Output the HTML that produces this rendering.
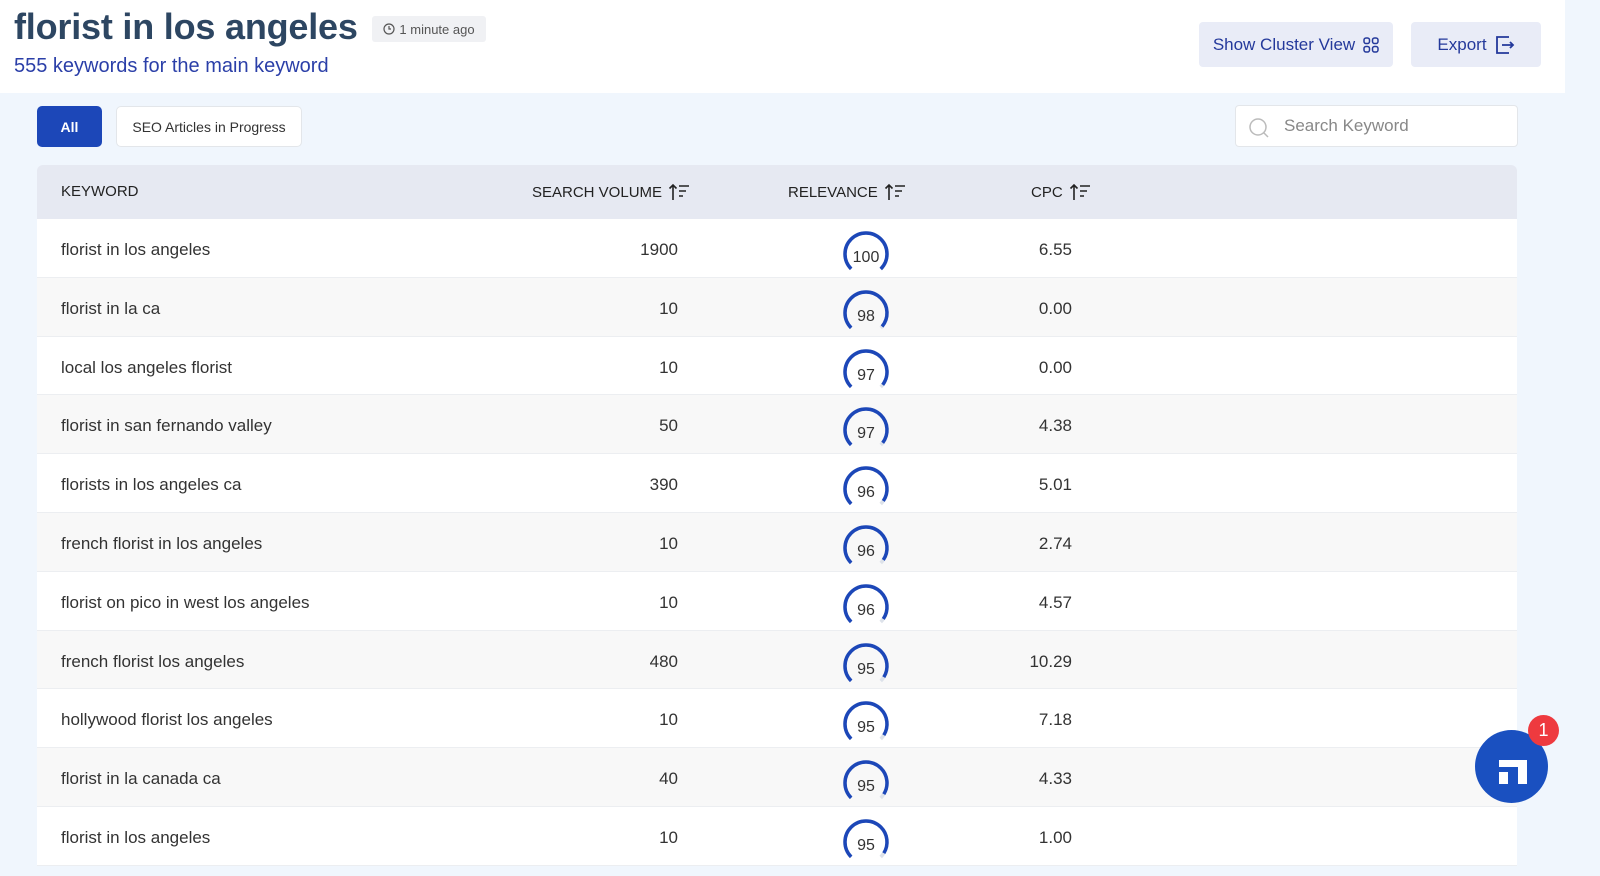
<!DOCTYPE html>
<html><head><meta charset="utf-8"><style>
*{box-sizing:border-box;margin:0;padding:0}
body{width:1600px;height:826px;overflow:hidden;background:#f0f6fd;font-family:"Liberation Sans",Arial,sans-serif;position:relative}
.hdr{position:absolute;left:0;top:0;width:1565px;height:93px;background:#fff}
.title{position:absolute;left:14px;top:6px;font-size:36px;font-weight:bold;color:#2d4662;letter-spacing:-0.2px}
.ago{position:absolute;left:372px;top:16px;height:26px;width:114px;background:#f0f1f4;border-radius:3px;font-size:13px;color:#555;display:flex;align-items:center;justify-content:center;gap:4px}
.sub{position:absolute;left:14px;top:55px;font-size:20px;color:#2b3fa8}
.btn{position:absolute;top:22px;height:45px;background:#e9ecf7;border-radius:4px;color:#24399b;font-size:17px;display:flex;align-items:center;justify-content:center;gap:8px}
.tab{position:absolute;top:106px;height:41px;border-radius:5px;font-size:14px;display:flex;align-items:center;justify-content:center}
.search{position:absolute;left:1235px;top:105px;width:283px;height:42px;background:#fff;border:1px solid #e3e6ea;border-radius:4px;font-size:17px;color:#888;display:flex;align-items:center;padding-left:48px}
.table{position:absolute;left:37px;top:165px;width:1480px}
.th{height:54px;background:#e6e9f2;border-radius:6px 6px 0 0;position:relative;font-size:15px;color:#222}
.th span{position:absolute;top:18px;display:flex;align-items:center;gap:6px}
.row{height:58.8px;position:relative;border-bottom:1px solid #eceef1;font-size:17px;color:#333}
.kw{position:absolute;left:24px;top:21px}
.sv{position:absolute;right:839px;top:21px}
.cpc{position:absolute;right:445px;top:21px}
.g{position:absolute;left:805px;top:11px;width:48px;height:48px}
.g b{position:absolute;left:0;top:0;width:48px;height:48px;line-height:48px;text-align:center;font-weight:normal;font-size:16px;color:#333;padding-top:4px}
.fab{position:absolute;left:1475px;top:730px;width:73px;height:73px;border-radius:50%;background:#1a50c0}
.badge{position:absolute;left:1528px;top:715px;width:31px;height:31px;border-radius:50%;background:#ee3a3f;color:#fff;font-size:18px;text-align:center;line-height:31px}
</style></head><body>
<div class="hdr">
<div class="title">florist in los angeles</div>
<div class="ago"><svg width="12" height="12" viewBox="0 0 12 12"><circle cx="6" cy="6" r="5" fill="none" stroke="#555" stroke-width="1.2"/><path d="M6 3v3h2" fill="none" stroke="#555" stroke-width="1.2"/></svg>1 minute ago</div>
<div class="sub">555 keywords for the main keyword</div>
<div class="btn" style="left:1199px;width:194px">Show Cluster View <svg width="16" height="16" viewBox="0 0 16 16" fill="none" stroke="#24399b" stroke-width="1.5"><rect x="1" y="1" width="5.5" height="5.5" rx="2"/><rect x="9.5" y="1" width="5.5" height="5.5" rx="2"/><rect x="1" y="9.5" width="5.5" height="5.5" rx="2"/><rect x="9.5" y="9.5" width="5.5" height="5.5" rx="2"/></svg></div>
<div class="btn" style="left:1411px;width:130px">Export <svg width="20" height="18" viewBox="0 0 20 18" fill="none" stroke="#24399b" stroke-width="1.8"><path d="M14 1H2v16h12"/><path d="M7 9h11M15 6l3 3-3 3"/></svg></div>
</div>
<div class="tab" style="left:37px;width:65px;background:#1c47b8;color:#fff;font-weight:bold">All</div>
<div class="tab" style="left:116px;width:186px;background:#fff;border:1px solid #e3e6ea;color:#333">SEO Articles in Progress</div>
<div class="search"><svg style="position:absolute;left:12px;top:11px" width="22" height="22" viewBox="0 0 22 22" fill="none" stroke="#bbb" stroke-width="1.5"><circle cx="10" cy="10" r="8"/><path d="M16 16l4 4"/></svg>Search Keyword</div>
<div class="table">
<div class="th" id="th"></div>
<div id="rows"></div>
</div>
<div class="fab"><svg width="73" height="73" viewBox="0 0 73 73"><path d="M24 30h28v24h-9V37H24z" fill="#fff"/><rect x="24" y="42" width="9" height="12" fill="#fff"/></svg></div>
<div class="badge">1</div>
<script>
var ic='<svg width="22" height="18" viewBox="0 0 22 18" fill="none" stroke="#222" stroke-width="1.6"><path d="M5 17V2M1.5 5.5L5 2l3.5 3.5M11 3h10M11 8h7M11 13h4"/></svg>';
document.getElementById("th").innerHTML='<span style="left:24px">KEYWORD</span><span style="left:495px">SEARCH VOLUME '+ic+'</span><span style="left:751px">RELEVANCE '+ic+'</span><span style="left:994px">CPC '+ic+'</span>';
var d=[["florist in los angeles","1900",100,"6.55"],["florist in la ca","10",98,"0.00"],["local los angeles florist","10",97,"0.00"],["florist in san fernando valley","50",97,"4.38"],["florists in los angeles ca","390",96,"5.01"],["french florist in los angeles","10",96,"2.74"],["florist on pico in west los angeles","10",96,"4.57"],["french florist los angeles","480",95,"10.29"],["hollywood florist los angeles","10",95,"7.18"],["florist in la canada ca","40",95,"4.33"],["florist in los angeles","10",95,"1.00"]];
var C=2*Math.PI*21,A=C*0.75,h="";
d.forEach(function(r,i){var bl=A*r[2]/100;
h+='<div class="row" style="background:'+(i%2?'#f8f8f8':'#fff')+'"><span class="kw">'+r[0]+'</span><span class="sv">'+r[1]+'</span><div class="g"><svg width="48" height="48" viewBox="0 0 48 48" style="transform:rotate(135deg)"><circle cx="24" cy="24" r="21" fill="none" stroke="#dde2ea" stroke-width="3.5" stroke-dasharray="'+A+' '+C+'"/><circle cx="24" cy="24" r="21" fill="none" stroke="#1c47b8" stroke-width="3.5" stroke-dasharray="'+bl+' '+C+'"/></svg><b>'+r[2]+'</b></div><span class="cpc">'+r[3]+'</span></div>';});
document.getElementById("rows").innerHTML=h;
</script>
</body></html>
